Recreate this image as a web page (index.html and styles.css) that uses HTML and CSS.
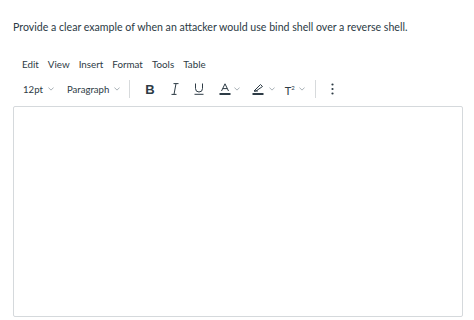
FILE: index.html
```html
<!DOCTYPE html>
<html lang="en">
<head>
  <meta charset="UTF-8">
  <title>Question</title>
  <link rel="stylesheet" href="styles.css">
</head>
<body>
  <div class="question">
    <p class="prompt">Provide a clear example of when an attacker would use bind shell over a reverse shell.</p>

    <div class="editor">
      <div class="menubar">
        <span>Edit</span>
        <span>View</span>
        <span>Insert</span>
        <span>Format</span>
        <span>Tools</span>
        <span>Table</span>
      </div>

      <div class="toolbar">
        <span class="select size">12pt <svg class="chev" viewBox="0 0 8 5"><path d="M0.5 0.5 L4 4 L7.5 0.5"/></svg></span>
        <span class="select para">Paragraph <svg class="chev" viewBox="0 0 8 5"><path d="M0.5 0.5 L4 4 L7.5 0.5"/></svg></span>
        <div class="sep first"></div>
        <span class="btn bold">B</span>
        <span class="btn italic">
          <svg class="ico" viewBox="0 0 8 12"><path d="M2.5 0.6 H7.5 M0.5 11.4 H5.5 M5 0.6 L3 11.4"/></svg>
        </span>
        <span class="btn under">
          <svg class="ico" viewBox="0 0 10 12"><path d="M1.5 0.5 V5.5 A3.5 3.5 0 0 0 8.5 5.5 V0.5 M0.5 11.3 H9.5"/></svg>
        </span>
        <span class="btn split color">
          <svg class="ico wide" viewBox="0 0 12 12"><path d="M2.5 8 L6 0.8 L9.5 8 M3.8 5.6 H8.2"/><rect class="fill" x="0.5" y="10" width="11" height="2"/></svg>
          <svg class="chev" viewBox="0 0 8 5"><path d="M0.5 0.5 L4 4 L7.5 0.5"/></svg>
        </span>
        <span class="btn split marker">
          <svg class="ico wide" viewBox="0 0 12 12"><path d="M2 8 L8.5 1.5 L10.5 3.5 L4 8 Z M2 8 H6"/><rect class="fill" x="0.5" y="10" width="11" height="2"/></svg>
          <svg class="chev" viewBox="0 0 8 5"><path d="M0.5 0.5 L4 4 L7.5 0.5"/></svg>
        </span>
        <span class="btn split super">
          <span class="sup">T<sup>2</sup></span>
          <svg class="chev" viewBox="0 0 8 5"><path d="M0.5 0.5 L4 4 L7.5 0.5"/></svg>
        </span>
        <div class="sep second"></div>
        <span class="btn more">
          <svg class="dots" viewBox="0 0 3 12"><circle cx="1.5" cy="1.5" r="1.1"/><circle cx="1.5" cy="6" r="1.1"/><circle cx="1.5" cy="10.5" r="1.1"/></svg>
        </span>
      </div>

      <div class="area"></div>
    </div>
  </div>
</body>
</html>
```

FILE: styles.css
```css
body {
  margin: 0;
  background-color: white;
  color: #2d3b45;
  font-family: Lato, 'Liberation Sans', Arial, sans-serif;
}

.question {
  padding: 20px 11px 3px 13px;
}

.prompt {
  margin: 0 0 22px 0;
  font-size: 10.6px;
  line-height: 14px;
  color: #2b3a44;
}

/* menu */

.menubar {
  display: flex;
  gap: 9px;
  padding-left: 9px;
  font-size: 9.8px;
  height: 16px;
  align-items: center;
}

/* toolbar */

.toolbar {
  display: flex;
  align-items: center;
  height: 26px;
  margin-top: 4px;
  padding-left: 10px;
  font-size: 9.6px;
}

.select {
  display: flex;
  align-items: center;
  gap: 5px;
}

.para {
  margin-left: 13px;
}

.chev {
  width: 6px;
  height: 4px;
  fill: none;
  stroke: #8b969e;
  stroke-width: 1;
}

.sep {
  width: 1px;
  height: 18px;
  background-color: #d7dadc;
}

.sep.first {
  margin-left: 9px;
}

.sep.second {
  margin-left: 10px;
}

.btn {
  display: flex;
  align-items: center;
  gap: 3px;
}

.bold {
  margin-left: 15px;
  font-family: 'Liberation Sans', Arial, sans-serif;
  font-weight: bold;
  font-size: 13px;
  color: #2d3b45;
}

.italic {
  margin-left: 16px;
}

.under {
  margin-left: 15px;
}

.color {
  margin-left: 15px;
}

.marker {
  margin-left: 12px;
  gap: 5px;
}

.super {
  margin-left: 10px;
  gap: 4px;
}

.ico {
  width: 8px;
  height: 12px;
  fill: none;
  stroke: #2d3b45;
  stroke-width: 1;
}

.under .ico {
  width: 10px;
}

.ico.wide {
  width: 12px;
}

.ico .fill {
  fill: #2d3b45;
  stroke: none;
}

.sup {
  font-size: 11px;
  line-height: 12px;
}

.sup sup {
  font-size: 6px;
  vertical-align: 5px;
}

.more {
  margin-left: 15px;
}

.dots {
  width: 3px;
  height: 12px;
  fill: #2d3b45;
}

.area {
  margin-top: 4px;
  height: 209px;
  border: 1px solid #d5d9dc;
  border-radius: 2px;
}
```
